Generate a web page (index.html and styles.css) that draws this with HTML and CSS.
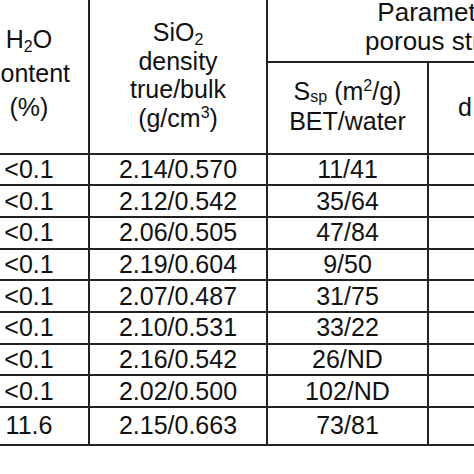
FILE: index.html
```html
<!DOCTYPE html>
<html lang="en">
<head>
<meta charset="utf-8">
<title>SiO2 samples</title>
<link rel="stylesheet" href="styles.css">
</head>
<body>
<table class="data">
  <colgroup>
    <col class="c-water">
    <col class="c-density">
    <col class="c-ssp">
    <col class="c-pore">
    <col class="c-vol">
  </colgroup>
  <thead>
    <tr class="head-top">
      <th rowspan="2" class="h-water">H<sub>2</sub>O<br>content<br>(%)</th>
      <th rowspan="2" class="h-density">SiO<sub>2</sub><br>density<br>true/bulk<br>(g/cm<sup>3</sup>)</th>
      <th colspan="3" class="h-params">Parameters of<br>porous structure</th>
    </tr>
    <tr class="head-sub">
      <th class="h-ssp">S<sub class="sp">sp</sub> (m<sup>2</sup>/g)<br>BET/water</th>
      <th class="h-pore">d (nm)</th>
      <th class="h-vol">V<sub>p</sub></th>
    </tr>
  </thead>
  <tbody>
    <tr><td>&lt;0.1</td><td>2.14/0.570</td><td>11/41</td><td></td><td></td></tr>
    <tr><td>&lt;0.1</td><td>2.12/0.542</td><td>35/64</td><td></td><td></td></tr>
    <tr><td>&lt;0.1</td><td>2.06/0.505</td><td>47/84</td><td></td><td></td></tr>
    <tr><td>&lt;0.1</td><td>2.19/0.604</td><td>9/50</td><td></td><td></td></tr>
    <tr><td>&lt;0.1</td><td>2.07/0.487</td><td>31/75</td><td></td><td></td></tr>
    <tr><td>&lt;0.1</td><td>2.10/0.531</td><td>33/22</td><td></td><td></td></tr>
    <tr><td>&lt;0.1</td><td>2.16/0.542</td><td>26/ND</td><td></td><td></td></tr>
    <tr><td>&lt;0.1</td><td>2.02/0.500</td><td>102/ND</td><td></td><td></td></tr>
    <tr class="last"><td>11.6</td><td>2.15/0.663</td><td>73/81</td><td></td><td></td></tr>
  </tbody>
</table>
</body>
</html>
```
FILE: styles.css
```css
* { box-sizing: border-box; }
html, body {
  margin: 0;
  padding: 0;
  background: #fff;
  overflow: hidden;
}
body {
  font-family: "Liberation Sans", Arial, Helvetica, sans-serif;
  font-size: 25px;
  color: #111;
}
.data {
  border-collapse: collapse;
  table-layout: fixed;
  width: 682px;
  margin: -20px 0 0 -32px;
}
.c-water { width: 120px; }
.c-density { width: 178px; }
.c-ssp { width: 161px; }
.c-pore { width: 132px; }
.c-vol { width: 91px; }

.data th,
.data td {
  border: 2px solid #222;
  padding: 0;
  text-align: center;
  font-weight: normal;
  white-space: nowrap;
}
.data th { vertical-align: top; }
.data td { vertical-align: middle; line-height: 27px; }

.data .head-top { height: 80.7px; }
.data .head-sub { height: 92px; }
.data tbody tr { height: 31.67px; }
.data tbody tr.last { height: 38px; }

.data .h-water { line-height: 34px; padding-top: 40px; }
.data .h-density { line-height: 28.5px; padding-top: 36px; }
.data .h-params { font-size: 26px; line-height: 29px; padding-top: 16px; }
.data .h-ssp { line-height: 30px; padding-top: 13.3px; }
.data .h-pore,
.data .h-vol { line-height: 30px; padding-top: 29.6px; }

sub {
  font-size: 16px;
  line-height: 0;
  vertical-align: -4px;
}
sub.sp { vertical-align: -2px; }
sup {
  font-size: 16px;
  line-height: 0;
  vertical-align: 9px;
}
```
